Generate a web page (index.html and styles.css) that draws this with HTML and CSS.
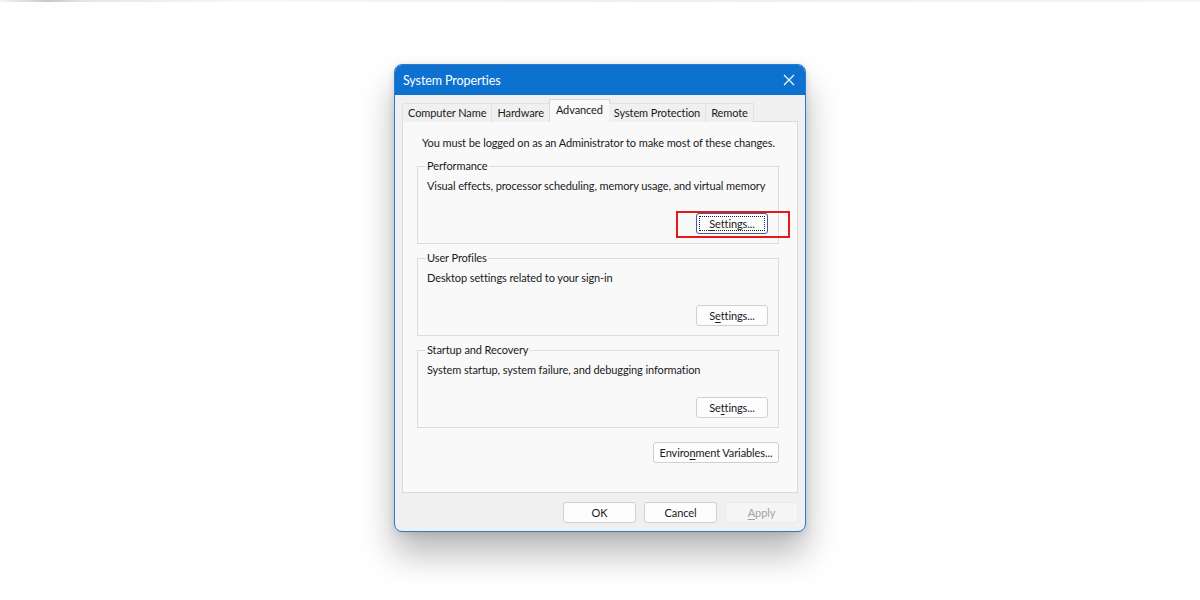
FILE: index.html
```html
<!DOCTYPE html>
<html lang="en">
<head>
    <meta charset="UTF-8">
    <title>System Properties</title>
    <link rel="stylesheet" href="styles.css">
</head>
<body>
    <div class="topline"></div>
    <div class="stage">
        <div class="window">
            <div class="titlebar">
                <span class="title">System Properties</span>
                <svg class="close" width="12" height="12" viewBox="0 0 12 12">
                    <path d="M1 1 L11 11 M11 1 L1 11" stroke="#fff" stroke-width="1.1" fill="none"/>
                </svg>
            </div>

            <div class="tabs">
                <div class="tab">Computer Name</div>
                <div class="tab">Hardware</div>
                <div class="tab active">Advanced</div>
                <div class="tab">System Protection</div>
                <div class="tab">Remote</div>
            </div>

            <div class="panel">
                <p class="notice">You must be logged on as an Administrator to make most of these changes.</p>

                <fieldset class="group">
                    <legend>Performance</legend>
                    <p class="desc">Visual effects, processor scheduling, memory usage, and virtual memory</p>
                    <div class="group-actions">
                        <span class="focus-wrap">
                            <button class="btn focused"><u>S</u>ettings...</button>
                            <span class="highlight"></span>
                        </span>
                    </div>
                </fieldset>

                <fieldset class="group">
                    <legend>User Profiles</legend>
                    <p class="desc">Desktop settings related to your sign-in</p>
                    <div class="group-actions">
                        <button class="btn">S<u>e</u>ttings...</button>
                    </div>
                </fieldset>

                <fieldset class="group">
                    <legend>Startup and Recovery</legend>
                    <p class="desc">System startup, system failure, and debugging information</p>
                    <div class="group-actions">
                        <button class="btn">Se<u>t</u>tings...</button>
                    </div>
                </fieldset>

                <div class="env-row">
                    <button class="btn env">Enviro<u>n</u>ment Variables...</button>
                </div>
            </div>

            <div class="footer">
                <button class="btn wide">OK</button>
                <button class="btn wide">Cancel</button>
                <button class="btn wide" disabled><u>A</u>pply</button>
            </div>
        </div>
    </div>
</body>
</html>
```

FILE: styles.css
```css
html, body {
    height: 100%;
}
body {
    margin: 0;
    background: #fff;
    font-family: Lato, 'Liberation Sans', sans-serif;
    font-size: 11px;
    letter-spacing: -0.1px;
    color: #1a1a1a;
}
.topline {
    height: 2px;
    background: linear-gradient(to right, #f4f4f4 0%, #c8c8c8 4%, #e6e6e6 7%, #f7f7f7 20%, #eeeeee 55%, #f5f5f5 100%);
}
.stage {
    display: flex;
    justify-content: center;
    padding-top: 62px;
}
.window {
    width: 410px;
    height: 466px;
    border: 1px solid #2a7bcb;
    border-radius: 8px;
    background: #f0f0f0;
    box-shadow: 0 22px 34px rgba(0, 0, 0, 0.28), 0 2px 8px rgba(0, 0, 0, 0.12);
    display: flex;
    flex-direction: column;
}
.titlebar {
    height: 30px;
    background: #0d72cf;
    color: #fff;
    display: flex;
    align-items: center;
    justify-content: space-between;
    padding: 0 10px 0 8px;
    border-radius: 7px 7px 0 0;
}
.title {
    font-size: 12.5px;
}
.close {
    display: block;
}
.tabs {
    display: flex;
    align-items: flex-end;
    padding: 0 7px;
    height: 27px;
    margin-bottom: -1px;
    position: relative;
    z-index: 1;
}
.tab {
    height: 18px;
    line-height: 18px;
    padding: 0 5px;
    border: 1px solid #e2e2e2;
    border-bottom: none;
    background: #f0f0f0;
    white-space: nowrap;
}
.tab + .tab {
    border-left: none;
}
.tab.active {
    height: 22px;
    line-height: 19px;
    background: #f9f9f9;
    border-color: #dadada;
    border-left: 1px solid #dadada;
    margin: 0 -1px;
    padding: 0 6px;
}
.panel {
    margin: 0 7px;
    height: 370px;
    border: 1px solid #dadada;
    background: #f9f9f9;
    padding: 0 18px 0 14px;
}
.notice {
    margin: 13px 0 0 5px;
    line-height: 16px;
    white-space: nowrap;
}
.group {
    margin: 7px 0 0 0;
    padding: 0 10px 0 9px;
    border: 1px solid #dcdcdc;
    height: 86px;
    box-sizing: border-box;
    min-inline-size: 0;
}
.group + .group {
    margin-top: 6px;
}
.group legend {
    padding: 0 1px;
    margin-left: -1px;
    line-height: 16px;
}
.desc {
    margin: 4px 0 0 0;
    line-height: 16px;
    white-space: nowrap;
}
.group-actions {
    display: flex;
    justify-content: flex-end;
    margin-top: 19px;
}
.focus-wrap {
    position: relative;
    display: flex;
}
.btn {
    font-family: inherit;
    font-size: 11px;
    letter-spacing: -0.1px;
    color: #1a1a1a;
    height: 21px;
    padding: 0 10px;
    background: #fdfdfd;
    border: 1px solid #d0d0d0;
    border-radius: 3px;
    line-height: 18px;
    white-space: nowrap;
}
.btn u {
    text-decoration-thickness: 1px;
    text-underline-offset: 2px;
}
.group .btn {
    width: 72px;
    padding: 0;
}
.btn.focused {
    border-color: #3a5f94;
    outline: 1px dotted #222;
    outline-offset: -4px;
}
.btn.wide {
    width: 73px;
    padding: 0;
}
.btn:disabled {
    background: #f5f5f5;
    border-color: #ececec;
    color: #a3a3a3;
}
.highlight {
    position: absolute;
    left: -20px;
    right: -22px;
    top: -2px;
    bottom: -4px;
    border: 2px solid #e41a1a;
}
.env-row {
    display: flex;
    justify-content: flex-end;
    margin-top: 14px;
}
.btn.env {
    width: 126px;
    padding: 0;
}
.footer {
    display: flex;
    justify-content: flex-end;
    gap: 8px;
    padding: 9px 7px 0 0;
}
```
